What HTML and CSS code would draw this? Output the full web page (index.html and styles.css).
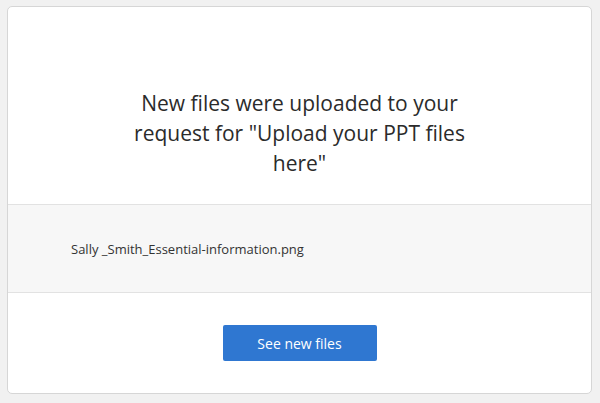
FILE: index.html
```html
<!DOCTYPE html>
<html>
<head>
<meta charset="utf-8">
<link rel="stylesheet" href="styles.css">
</head>
<body>
<div class="card">
  <div class="head">
    <h1 class="title">New files were uploaded to your request for "Upload your PPT files here"</h1>
  </div>
  <div class="band">
    <span class="file">Sally _Smith_Essential-information.png</span>
  </div>
  <div class="foot">
    <a class="btn">See new files</a>
  </div>
</div>
</body>
</html>
```

FILE: styles.css
```css
html, body { margin: 0; padding: 0; }
body {
  background: #f1f1f1;
  font-family: "Open Sans", "Noto Sans", sans-serif;
  width: 600px;
  height: 403px;
  padding: 6px 8px 0 7px;
  box-sizing: border-box;
}
.card {
  background: #fff;
  border: 1px solid #d6d6d6;
  border-radius: 5px;
  height: 388px;
  box-sizing: border-box;
  display: flex;
  flex-direction: column;
}
.head {
  padding: 81px 20px 0;
  height: 197px;
  box-sizing: border-box;
  display: flex;
  justify-content: center;
}
.title {
  margin: 0;
  max-width: 360px;
  text-align: center;
  font-size: 21px;
  line-height: 30px;
  font-weight: 400;
  color: #2b2b2b;
}
.band {
  background: #f7f7f7;
  border-top: 1px solid #e2e2e2;
  border-bottom: 1px solid #e2e2e2;
  height: 89px;
  box-sizing: border-box;
  display: flex;
  align-items: center;
  padding: 0 0 0 63px;
}
.file {
  font-size: 13px;
  color: #333;
}
.foot {
  display: flex;
  justify-content: center;
  padding-top: 32px;
}
.btn {
  display: flex;
  align-items: center;
  justify-content: center;
  width: 154px;
  height: 36px;
  background: #2f77d1;
  color: #fff;
  font-size: 14px;
  border-radius: 2px;
}
```
